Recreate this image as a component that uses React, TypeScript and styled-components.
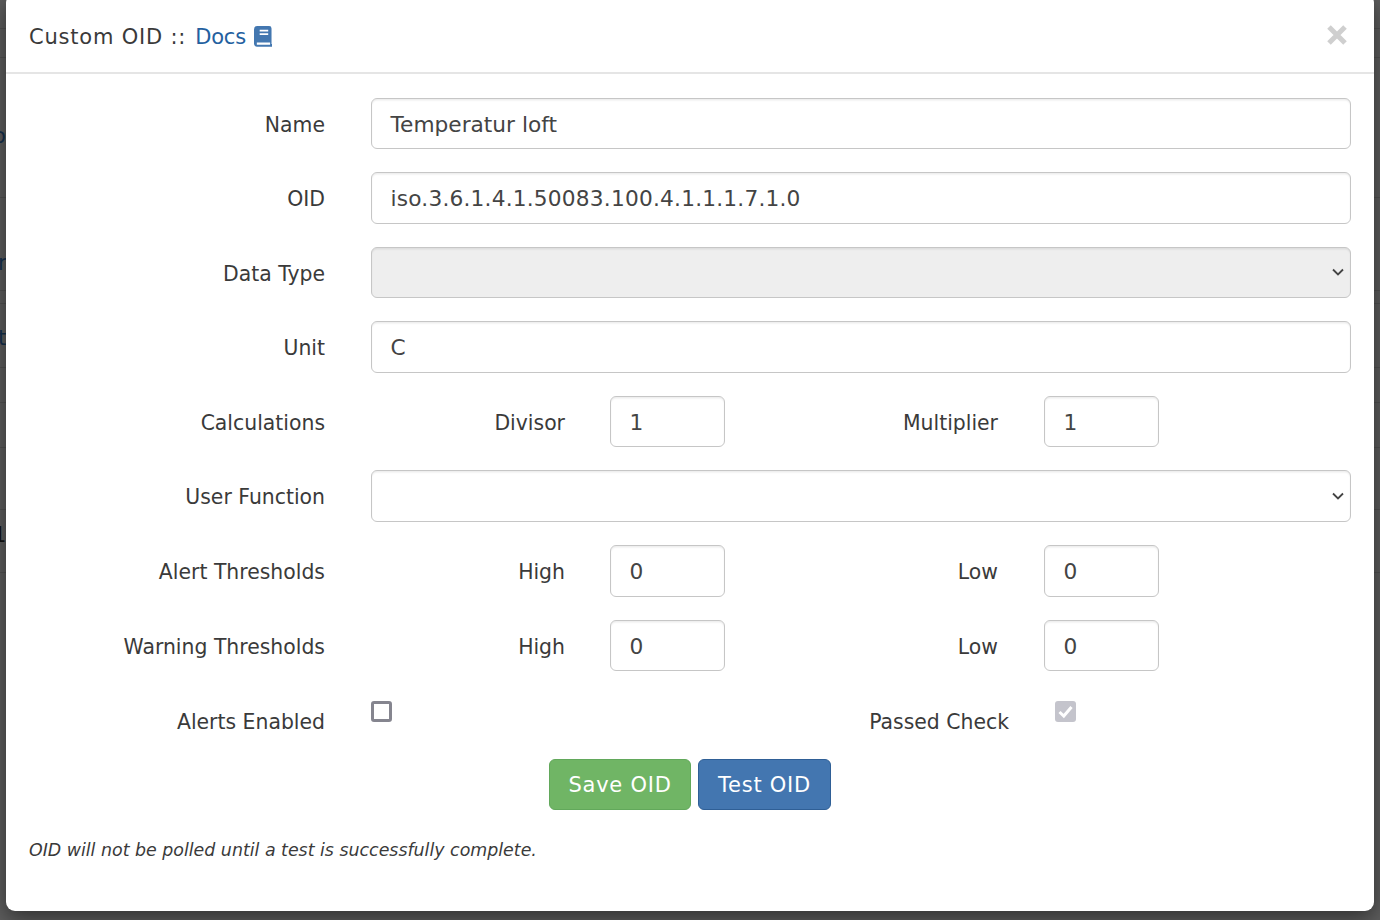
import React from "react";
import styled, { createGlobalStyle } from "styled-components";

const Global = createGlobalStyle`
  html, body { margin: 0; padding: 0; height: 100%; overflow: hidden; background: #5e5e5e; }
  * { box-sizing: border-box; }
  body { font-family: "DejaVu Sans", Verdana, sans-serif; font-size: 21px; color: #333; }
`;

const Page = styled.div`
  position: relative;
  width: 1380px;
  height: 920px;
  overflow: hidden;
  background: #5e5e5e;
`;

const BackRow = styled.div<{ $h: number; $pt?: number; $pb?: number }>`
  height: ${(p) => p.$h}px;
  padding-top: ${(p) => p.$pt ?? 0}px;
  padding-bottom: ${(p) => p.$pb ?? 0}px;
  border-bottom: 1px solid #525252;
  font-size: 21px;
  display: flex;
  align-items: center;
  overflow: hidden;
`;

const BackGlyph = styled.span<{ $dark?: boolean; $ml: number }>`
  margin-left: ${(p) => p.$ml}px;
  color: ${(p) => (p.$dark ? "#111" : "#15304d")};
`;

const Modal = styled.div`
  position: absolute;
  left: 6px;
  top: -6px;
  width: 1368px;
  height: 917px;
  background: #fff;
  border-radius: 9px;
  box-shadow: 0 7px 22px rgba(0, 0, 0, 0.5);
`;

const Header = styled.div`
  height: 80px;
  padding: 7px 23px 0;
  border-bottom: 2px solid #e5e5e5;
  display: flex;
  align-items: center;
  justify-content: space-between;
`;

const Title = styled.div`
  font-size: 21px;
  display: flex;
  align-items: center;
  gap: 9px;
  color: #3a3a3a;
`;

const TitleText = styled.span`
  letter-spacing: 0.8px;
`;

const DocLink = styled.a`
  color: #23609f;
  display: inline-flex;
  align-items: center;
  gap: 8px;
  letter-spacing: -0.2px;
`;

const Close = styled.button`
  border: 0;
  background: none;
  padding: 0;
  margin: -3px 2px 0 0;
  width: 24px;
  height: 24px;
  display: flex;
`;

const Form = styled.div`
  padding: 23.5px 23px 0;
  display: flex;
  flex-direction: column;
`;

const Row = styled.div`
  display: grid;
  grid-template-columns: 296px 46px 1fr;
  height: 74.6px;
  flex: none;
`;

const Label = styled.label`
  grid-column: 1;
  height: 51px;
  line-height: 55px;
  font-size: 20.4px;
  text-align: right;
  white-space: nowrap;
  color: #3a3a3a;
`;

const Field = styled.div`
  grid-column: 3;
  height: 51.5px;
  width: 980px;
  display: flex;
`;

const TextInput = styled.div`
  width: 100%;
  height: 51.5px;
  border: 1.5px solid #c6c6c6;
  border-radius: 6px;
  padding: 0 18.5px;
  line-height: 52.5px;
  font-size: 21.7px;
  color: #444;
  background: #fff;
  box-shadow: inset 0 1.5px 1.5px rgba(0, 0, 0, 0.075);
  white-space: nowrap;
`;

const OidInput = styled(TextInput)`
  letter-spacing: 0.2px;
`;

const SelectBox = styled.div<{ $disabled?: boolean }>`
  width: 100%;
  height: 51.5px;
  border: 1.5px solid #c6c6c6;
  border-radius: 6px;
  background: ${(p) => (p.$disabled ? "#eeeeee" : "#fff")};
  box-shadow: inset 0 1.5px 1.5px rgba(0, 0, 0, 0.075);
  display: flex;
  align-items: center;
  justify-content: flex-end;
  padding-right: 5px;
`;

const SubGrid = styled.div`
  display: grid;
  grid-template-columns: 194px 160px 273px 160px;
  width: 100%;
`;

const SubLabel = styled.span`
  height: 51px;
  line-height: 55px;
  font-size: 20.4px;
  text-align: right;
  white-space: nowrap;
  color: #3a3a3a;
`;

const SmallInput = styled(TextInput)<{ $gap: number }>`
  width: 114.5px;
  margin-left: ${(p) => p.$gap}px;
`;

const CheckRow = styled.div`
  display: grid;
  grid-template-columns: 296px 46px 498px 140px 46px 1fr;
  height: 74.6px;
  flex: none;
  line-height: 57px;
`;

const CheckRowLabel = styled(Label)`
  line-height: 57px;
`;

const Check = styled.span<{ $checked?: boolean; $col: number }>`
  grid-column: ${(p) => p.$col};
  display: block;
  width: 21px;
  height: 21px;
  margin-top: 7px;
  border-radius: 3px;
  background: ${(p) => (p.$checked ? "#c4c4cc" : "#fff")};
  border: ${(p) => (p.$checked ? "0" : "3px solid #85858f")};
`;

const CheckLabel = styled(SubLabel)`
  grid-column: 4;
  line-height: 57px;
`;

const Actions = styled.div`
  display: flex;
  justify-content: center;
  gap: 7px;
  margin-top: -9.5px;
`;

const Button = styled.button<{ $bg: string; $line: string; $w: number }>`
  width: ${(p) => p.$w}px;
  height: 51px;
  border: 1.5px solid ${(p) => p.$line};
  border-radius: 6px;
  background: ${(p) => p.$bg};
  color: #fff;
  font: inherit;
  letter-spacing: 0.75px;
  padding: 0;
`;

const Note = styled.p`
  margin: 30px 0 0;
  font-size: 17.4px;
  font-style: italic;
  color: #3a3a3a;
`;

const Chevron = () => (
  <svg width="14" height="14" viewBox="0 0 14 14" fill="none" stroke="#444" strokeWidth="1.8">
    <path d="M2 4.5 7 9.5l5-5" />
  </svg>
);

const BookIcon = () => (
  <svg width="18" height="21" viewBox="0 0 19 22">
    <path fill="#4377b0" d="M3.5 0H16a2.5 2.5 0 0 1 2.5 2.5V19H19v2.8H3.5A3.2 3.2 0 0 1 0 18.5V3.5A3.5 3.5 0 0 1 3.5 0z" />
    <path fill="#fff" d="M6 4h9v1.8H6zM6 7.6h9v1.8H6zM3 17.4h14v2.2H3z" />
  </svg>
);

const CheckMark = () => (
  <svg width="21" height="21" viewBox="0 0 21 21" fill="none" stroke="#fff" strokeWidth="3" display="block">
    <path d="M4.5 11 8.8 15 16.5 6" />
  </svg>
);

const CloseIcon = () => (
  <svg width="24" height="24" viewBox="0 0 24 24" stroke="#cfcfcf" strokeWidth="5">
    <path d="M4 4l16 16M20 4 4 20" />
  </svg>
);

export default function App() {
  return (
    <Page>
      <Global />
      <BackRow $h={29} />
      <BackRow $h={29} />
      <BackRow $h={140} $pt={16}><BackGlyph $ml={-7}>o</BackGlyph></BackRow>
      <BackRow $h={93} $pt={38}><BackGlyph $ml={-2}>r</BackGlyph></BackRow>
      <BackRow $h={13} />
      <BackRow $h={64} $pt={4}><BackGlyph $ml={-2}>t</BackGlyph></BackRow>
      <BackRow $h={35} />
      <BackRow $h={45} />
      <BackRow $h={62} />
      <BackRow $h={63} $pb={12}><BackGlyph $dark $ml={-7}>1</BackGlyph></BackRow>
      <Modal>
        <Header>
          <Title>
            <TitleText>Custom OID ::</TitleText>
            <DocLink>Docs <BookIcon /></DocLink>
          </Title>
          <Close aria-label="Close"><CloseIcon /></Close>
        </Header>
        <Form>
          <Row><Label>Name</Label><Field><TextInput>Temperatur loft</TextInput></Field></Row>
          <Row><Label>OID</Label><Field><OidInput>iso.3.6.1.4.1.50083.100.4.1.1.1.7.1.0</OidInput></Field></Row>
          <Row><Label>Data Type</Label><Field><SelectBox $disabled><Chevron /></SelectBox></Field></Row>
          <Row><Label>Unit</Label><Field><TextInput>C</TextInput></Field></Row>
          <Row>
            <Label>Calculations</Label>
            <Field><SubGrid>
              <SubLabel>Divisor</SubLabel><SmallInput $gap={45}>1</SmallInput>
              <SubLabel>Multiplier</SubLabel><SmallInput $gap={46}>1</SmallInput>
            </SubGrid></Field>
          </Row>
          <Row><Label>User Function</Label><Field><SelectBox><Chevron /></SelectBox></Field></Row>
          <Row>
            <Label>Alert Thresholds</Label>
            <Field><SubGrid>
              <SubLabel>High</SubLabel><SmallInput $gap={45}>0</SmallInput>
              <SubLabel>Low</SubLabel><SmallInput $gap={46}>0</SmallInput>
            </SubGrid></Field>
          </Row>
          <Row>
            <Label>Warning Thresholds</Label>
            <Field><SubGrid>
              <SubLabel>High</SubLabel><SmallInput $gap={45}>0</SmallInput>
              <SubLabel>Low</SubLabel><SmallInput $gap={46}>0</SmallInput>
            </SubGrid></Field>
          </Row>
          <CheckRow>
            <CheckRowLabel>Alerts Enabled</CheckRowLabel>
            <Check $col={3} />
            <CheckLabel>Passed Check</CheckLabel>
            <Check $checked $col={6}><CheckMark /></Check>
          </CheckRow>
          <Actions>
            <Button $bg="#70b565" $line="#62a85b" $w={142}>Save OID</Button>
            <Button $bg="#4376b0" $line="#2f5f96" $w={133}>Test OID</Button>
          </Actions>
          <Note>OID will not be polled until a test is successfully complete.</Note>
        </Form>
      </Modal>
    </Page>
  );
}
